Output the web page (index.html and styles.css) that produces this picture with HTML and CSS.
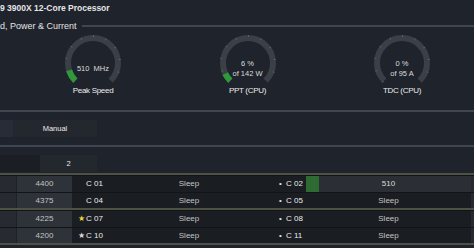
FILE: index.html
```html
<!DOCTYPE html>
<html lang="en">
<head>
  <meta charset="UTF-8">
  <title>Ryzen 9 3900X - Speed, Power &amp; Current</title>
  <link rel="stylesheet" href="styles.css">
</head>
<body>
  <div class="title">9 3900X 12-Core Processor</div>
  <div class="section-head"><span>d, Power &amp; Current</span><span class="rule"></span></div>

  <div class="gauges">
    <div class="gauge">
      <svg width="64" height="56" viewBox="0 0 64 56">
        <path class="ring" d="M14.32 49.68 A25 25 0 1 1 49.68 49.68"/>
        <path class="fill" d="M14.32 49.68 A25 25 0 0 1 8.1 39.5"/>
        <path class="ticks" d="M12.91 51.09 A27 27 0 1 1 51.09 51.09"/>
      </svg>
      <div class="gauge-val"><span>510&nbsp; MHz</span></div>
      <div class="gauge-label">Peak Speed</div>
    </div>
    <div class="gauge">
      <svg width="64" height="56" viewBox="0 0 64 56">
        <path class="ring" d="M14.32 49.68 A25 25 0 1 1 49.68 49.68"/>
        <path class="fill" d="M14.32 49.68 A25 25 0 0 1 9.2 42.6"/>
        <path class="ticks" d="M12.91 51.09 A27 27 0 1 1 51.09 51.09"/>
      </svg>
      <div class="gauge-val"><span>6 %</span><span>of 142 W</span></div>
      <div class="gauge-label">PPT (CPU)</div>
    </div>
    <div class="gauge">
      <svg width="64" height="56" viewBox="0 0 64 56">
        <path class="ring" d="M14.32 49.68 A25 25 0 1 1 49.68 49.68"/>
        <path class="ticks" d="M12.91 51.09 A27 27 0 1 1 51.09 51.09"/>
      </svg>
      <div class="gauge-val"><span>0 %</span><span>of 95 A</span></div>
      <div class="gauge-label">TDC (CPU)</div>
    </div>
  </div>

  <div class="sep"></div>
  <div class="ctl">
    <div class="ctl-box"><span class="ctl-cap cap-sm"></span><span class="ctl-val">Manual</span></div>
  </div>
  <div class="sep"></div>
  <div class="ctl">
    <div class="ctl-box"><span class="ctl-cap cap-lg"></span><span class="ctl-val">2</span></div>
  </div>

  <div class="cores">
    <div class="group">
      <div class="row">
        <span class="c-pad"></span><span class="c-num">4400</span>
        <span class="c-lab">C 01</span><span class="c-val">Sleep</span>
        <span class="c-lab r"><i class="dot">&bull;</i>C 02</span><span class="c-val bar">510</span>
        <span class="c-end"></span>
      </div>
      <div class="row">
        <span class="c-pad"></span><span class="c-num">4375</span>
        <span class="c-lab">C 04</span><span class="c-val">Sleep</span>
        <span class="c-lab r"><i class="dot">&bull;</i>C 05</span><span class="c-val">Sleep</span>
        <span class="c-end"></span>
      </div>
    </div>
    <div class="group">
      <div class="row">
        <span class="c-pad"></span><span class="c-num">4225</span>
        <span class="c-lab"><i class="star gold">&#9733;</i>C 07</span><span class="c-val">Sleep</span>
        <span class="c-lab r"><i class="dot">&bull;</i>C 08</span><span class="c-val">Sleep</span>
        <span class="c-end"></span>
      </div>
      <div class="row">
        <span class="c-pad"></span><span class="c-num">4200</span>
        <span class="c-lab"><i class="star">&#9733;</i>C 10</span><span class="c-val">Sleep</span>
        <span class="c-lab r"><i class="dot">&bull;</i>C 11</span><span class="c-val">Sleep</span>
        <span class="c-end"></span>
      </div>
    </div>
  </div>
</body>
</html>
```

FILE: styles.css
```css
body { margin: 0; background: #1f232b; font-family: "Liberation Sans", Arial, sans-serif; color: #e2e2e2; width: 474px; height: 248px; overflow: hidden; }

.title { height: 16px; line-height: 16px; font-size: 8.5px; font-weight: bold; color: #e6e6e6; white-space: nowrap; }

.section-head { margin-top: 4px; height: 12px; line-height: 12px; display: flex; align-items: center; gap: 5px; font-size: 9px; color: #e4e4e4; white-space: nowrap; }
.section-head .rule { flex: 1; height: 2px; background: #41464e; }

.gauges { margin-top: -1px; display: flex; gap: 74.5px; padding-left: 53px; }
.gauge { position: relative; width: 80px; }
.gauge svg { display: block; margin: 0 auto; }
.gauge .ring { fill: none; stroke: #3b3f47; stroke-width: 6; }
.gauge .fill { fill: none; stroke: #2f9a3a; stroke-width: 6; }
.gauge .ticks { fill: none; stroke: #686d75; stroke-width: 2; stroke-dasharray: 0.7 12.02; }
.gauge-val { position: absolute; left: 0; right: 0; top: 28px; height: 20px; display: flex; flex-direction: column; justify-content: center; align-items: center; font-size: 7.5px; line-height: 10px; color: #dcdcdc; }
.gauge-label { margin-top: -1px; line-height: 10px; text-align: center; font-size: 8px; letter-spacing: -0.3px; color: #ececec; }

.sep { margin-top: 14px; height: 2px; background: #40454e; }
.sep + .ctl + .sep { margin-top: 8px; }
.ctl { margin-top: 8px; }
.ctl-box { width: 97px; height: 17px; display: flex; background: #23272e; font-size: 7.5px; color: #ececec; }
.ctl-cap { display: block; }
.cap-sm { width: 13px; background: #272c36; }
.cap-lg { width: 40px; background: #1b1e24; }
.ctl-val { flex: 1; text-align: center; line-height: 17px; }

.cores { margin-top: 1px; border-bottom: 2px solid #4d5245; }
.group { border-top: 2px solid #4d5245; padding-top: 1px; background: #121418; }
.row { display: grid; grid-template-columns: 16px 56px 32px 170px 32px 165px 3px; height: 16px; font-size: 8px; line-height: 16px; }
.row + .row { border-top: 1px solid #121418; height: 15px; line-height: 15px; }
.row span { display: block; white-space: nowrap; }
.c-pad { background: #272b31; }
.c-num { background: #2e3239; color: #c3c3c3; text-align: center; border-left: 1px solid #1d2025; }
.c-lab { background: #1a1d22; color: #ececec; padding-left: 14px; }
.c-lab.r { padding-left: 5px; }
.c-val { background: #1a1d22; color: #c4c4c4; text-align: center; }
.c-val.bar { background: linear-gradient(to right, #2e6b33 0, #2e6b33 13px, #2b2f35 13px, #2b2f35 100%); color: #dcdcdc; }
.c-end { background: #262a30; }

.star { font-style: normal; display: inline-block; width: 8px; margin-left: -8px; font-family: "DejaVu Sans", sans-serif; font-size: 8px; color: #d8d8d8; }
.star.gold { color: #e9d33a; }
.dot { font-style: normal; display: inline-block; width: 7px; font-size: 8px; color: #e0e0e0; }
```
